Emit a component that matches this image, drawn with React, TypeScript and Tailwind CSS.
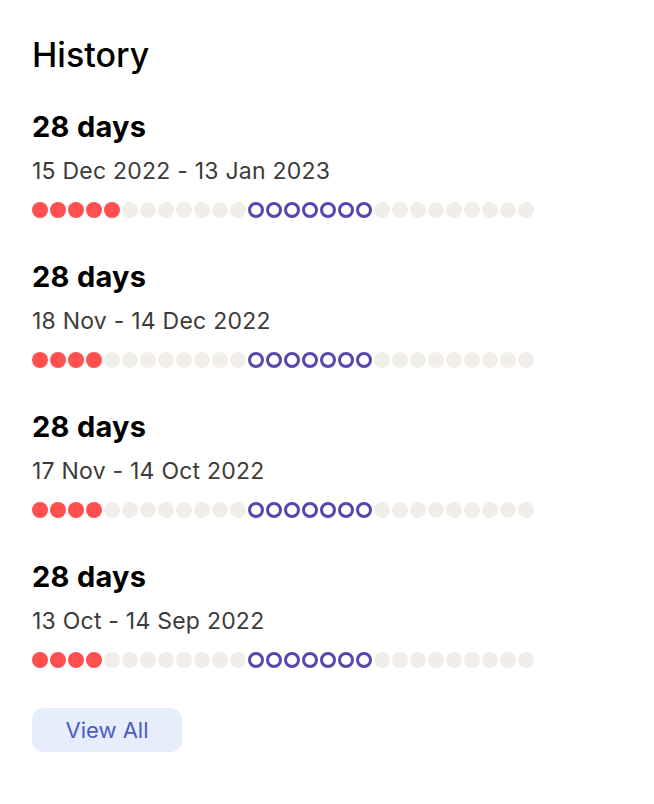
const periods = [
  { range: "15 Dec 2022 - 13 Jan 2023", red: 5 },
  { range: "18 Nov - 14 Dec 2022", red: 4 },
  { range: "17 Nov - 14 Oct 2022", red: 4 },
  { range: "13 Oct - 14 Sep 2022", red: 4 },
];

function Dot({ kind }: { kind: "red" | "gray" | "ring" }) {
  if (kind === "red") return <span className="h-4 w-4 rounded-full bg-[#ff4f4f]" />;
  if (kind === "ring")
    return <span className="box-border h-4 w-4 rounded-full border-[3px] border-[#5746b0]" />;
  return <span className="h-4 w-4 rounded-full bg-[#f1eeea]" />;
}

function DotRow({ red }: { red: number }) {
  const dots: ("red" | "gray" | "ring")[] = [];
  for (let i = 0; i < 28; i++) {
    if (i < red) dots.push("red");
    else if (i >= 12 && i < 19) dots.push("ring");
    else dots.push("gray");
  }
  return (
    <div className="flex gap-[2px]">
      {dots.map((k, i) => (
        <Dot key={i} kind={k} />
      ))}
    </div>
  );
}

export default function App() {
  return (
    <div
      className="min-h-screen bg-white pl-8 pt-[35px] text-black"
      style={{ fontFamily: "Inter, 'Noto Sans', sans-serif" }}
    >
      <h1 className="text-[34px] font-medium leading-[40px]">History</h1>

      <div className="mt-[34px] flex flex-col gap-[41px]">
        {periods.map((p, i) => (
          <div key={i}>
            <div className="text-[29px] font-bold leading-[36px] tracking-[0.01em]">28 days</div>
            <div className="mt-[11px] text-[23px] leading-[30px] tracking-[0.01em] text-[#3d3b38]">
              {p.range}
            </div>
            <div className="mt-4">
              <DotRow red={p.red} />
            </div>
          </div>
        ))}
      </div>

      <button className="mt-10 flex h-11 w-[150px] items-center justify-center rounded-xl bg-[#e6edfc] text-[22px] text-[#4a5cc4]">
        View All
      </button>
    </div>
  );
}
